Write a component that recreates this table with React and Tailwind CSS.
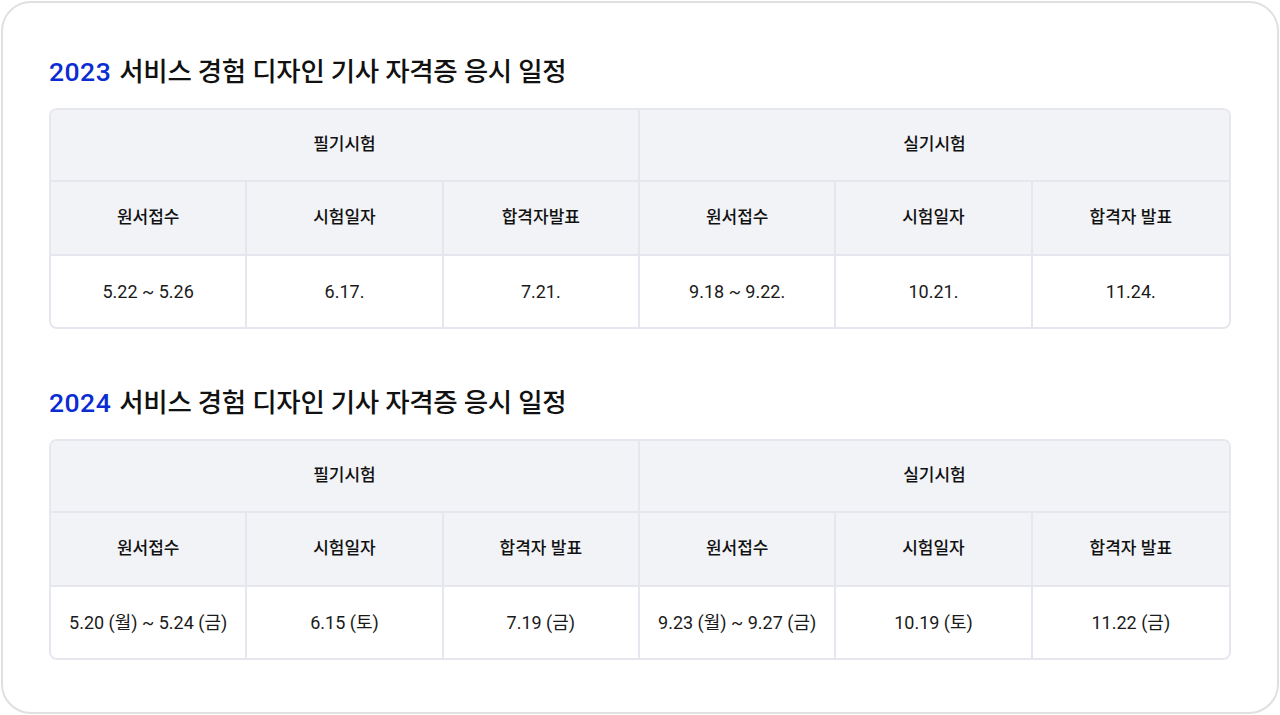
import React from 'react';

const font = { fontFamily: 'Roboto, "Noto Sans CJK KR", sans-serif' };

const schedules = [
  {
    year: '2023',
    subs: ['원서접수', '시험일자', '합격자발표', '원서접수', '시험일자', '합격자 발표'],
    dates: ['5.22 ~ 5.26', '6.17.', '7.21.', '9.18 ~ 9.22.', '10.21.', '11.24.'],
  },
  {
    year: '2024',
    subs: ['원서접수', '시험일자', '합격자 발표', '원서접수', '시험일자', '합격자 발표'],
    dates: ['5.20 (월) ~ 5.24 (금)', '6.15 (토)', '7.19 (금)', '9.23 (월) ~ 9.27 (금)', '10.19 (토)', '11.22 (금)'],
  },
];

const ScheduleTable = ({ year, subs, dates }) => {
  return (
    <section>
      <h2 className="h-[38px] flex items-center text-[26.5px] font-medium text-[#111] mb-[17px] tracking-[-0.3px]">
        <span className="text-[#0b2cd1] tracking-[0.5px]">{year}</span>
        <span className="ml-[8px]">서비스 경험 디자인 기사 자격증 응시 일정</span>
      </h2>
      <div className="w-[1182px] border-2 border-[#e6e7ee] rounded-[8px] overflow-hidden">
        <div className="grid grid-cols-6 bg-[#f2f3f7]">
          <div className="col-span-3 h-[72px] flex items-center justify-center text-[17px] font-medium text-[#111] border-r-2 border-b-2 border-[#e6e7ee]">
            필기시험
          </div>
          <div className="col-span-3 h-[72px] flex items-center justify-center text-[17px] font-medium text-[#111] border-b-2 border-[#e6e7ee]">
            실기시험
          </div>
          {subs.map((s, i) => (
            <div
              key={i}
              className={
                'h-[74px] flex items-center justify-center text-[17px] font-medium text-[#111] border-b-2 border-[#e6e7ee] ' +
                (i < 5 ? 'border-r-2' : '')
              }
            >
              {s}
            </div>
          ))}
        </div>
        <div className="grid grid-cols-6 bg-white">
          {dates.map((d, i) => (
            <div
              key={i}
              className={
                'h-[71px] flex items-center justify-center text-[18px] text-[#1a1a1a] border-[#e6e7ee] ' +
                (i < 5 ? 'border-r-2' : '')
              }
            >
              {d}
            </div>
          ))}
        </div>
      </div>
    </section>
  );
};

export default function App() {
  return (
    <div className="w-[1280px] h-[715px] bg-white p-[1px]" style={font}>
      <div className="h-full border-2 border-[#e0e0e0] rounded-[30px] pl-[46px] pt-[50px]">
        <ScheduleTable {...schedules[0]} />
        <div className="h-[55px]" />
        <ScheduleTable {...schedules[1]} />
      </div>
    </div>
  );
}
